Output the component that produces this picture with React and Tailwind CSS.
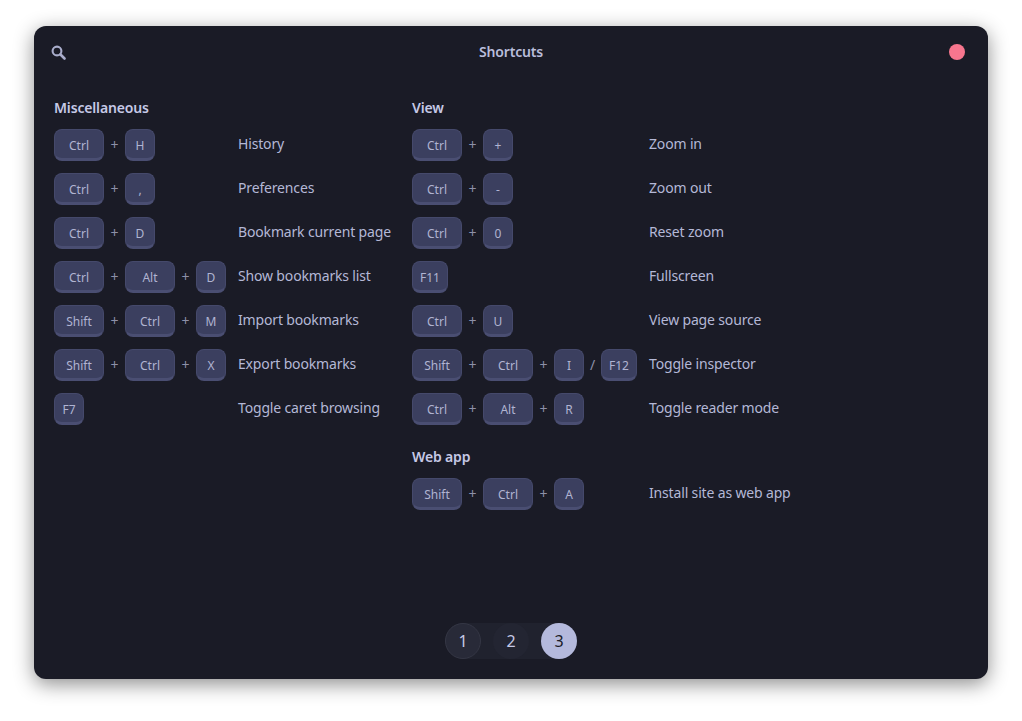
import React from 'react';

const miscRows = [
  { keys: ['Ctrl', '+', 'H'], label: 'History' },
  { keys: ['Ctrl', '+', ','], label: 'Preferences' },
  { keys: ['Ctrl', '+', 'D'], label: 'Bookmark current page' },
  { keys: ['Ctrl', '+', 'Alt', '+', 'D'], label: 'Show bookmarks list' },
  { keys: ['Shift', '+', 'Ctrl', '+', 'M'], label: 'Import bookmarks' },
  { keys: ['Shift', '+', 'Ctrl', '+', 'X'], label: 'Export bookmarks' },
  { keys: ['F7'], label: 'Toggle caret browsing' },
];

const viewRows = [
  { keys: ['Ctrl', '+', 'plus'], label: 'Zoom in' },
  { keys: ['Ctrl', '+', '-'], label: 'Zoom out' },
  { keys: ['Ctrl', '+', '0'], label: 'Reset zoom' },
  { keys: ['F11'], label: 'Fullscreen' },
  { keys: ['Ctrl', '+', 'U'], label: 'View page source' },
  { keys: ['Shift', '+', 'Ctrl', '+', 'I', '/', 'F12'], label: 'Toggle inspector' },
  { keys: ['Ctrl', '+', 'Alt', '+', 'R'], label: 'Toggle reader mode' },
];

const webRows = [
  { keys: ['Shift', '+', 'Ctrl', '+', 'A'], label: 'Install site as web app' },
];

const MODIFIERS = ['Ctrl', 'Alt', 'Shift'];

function Key({ name }) {
  const text = name === 'plus' ? '+' : name;
  const wide = MODIFIERS.includes(text);
  return (
    <div className={`h-8 ${wide ? 'w-[50px]' : 'min-w-[30px] px-[7px]'} flex items-center justify-center rounded-lg bg-[#3b3f5f] border border-[#45496b] border-b-[3px] border-b-[#4a4e72] text-[12px] text-[#b0b4d2] pt-[3px]`}>
      {text}
    </div>
  );
}

function Row({ keys, label, keysWidth }) {
  return (
    <div className="flex items-center h-8">
      <div className={`flex items-center shrink-0 ${keysWidth}`}>
        {keys.map((k, i) =>
          k === '+' ? (
            <span key={i} className="w-[21px] text-center text-[14px] text-[#8d90a8] -mt-0.5">+</span>
          ) : k === '/' ? (
            <span key={i} className="w-[17px] text-center text-[14px] text-[#8d90a8] -mt-0.5">/</span>
          ) : (
            <Key key={i} name={k} />
          )
        )}
      </div>
      <span className="text-[14px] tracking-[-0.16px] text-[#b4b8d6] -mt-[3px]">{label}</span>
    </div>
  );
}

function Section({ title, rows, keysWidth }) {
  return (
    <div className="flex flex-col gap-3">
      <h2 className="h-5 leading-[22px] text-[14px] tracking-[-0.16px] font-semibold text-[#c6c9e6]">{title}</h2>
      {rows.map((r) => (
        <Row key={r.label} {...r} keysWidth={keysWidth} />
      ))}
    </div>
  );
}

function Page({ n, state }) {
  const cls =
    state === 'active'
      ? 'bg-[#b4b9dc] text-[#1a1b26]'
      : state === 'hover'
        ? 'bg-[#282a38] border border-[#343644] text-[#c6c9e6]'
        : 'bg-[#232532] text-[#c6c9e6]';
  return <div className={`w-9 h-9 rounded-full flex items-center justify-center text-[16px] ${cls}`}>{n}</div>;
}

export default function App() {
  return (
    <div className="w-[1022px] h-[721px] bg-white pt-[26px] pl-[34px] font-['Noto_Sans',sans-serif]">
      <div className="w-[954px] h-[653px] rounded-xl bg-[#1a1b26] flex flex-col shadow-[0_5px_20px_rgba(0,0,0,0.45)]">
        {/* Header */}
        <div className="flex items-center justify-between h-[52px] pl-4 pr-[23px] shrink-0">
          <div className="w-[23px] pl-px">
            <svg width="15" height="15" viewBox="0 0 15 15" fill="none" stroke="#a9adcb">
              <circle cx="6" cy="6" r="4.4" strokeWidth="2.1" />
              <path d="M9.5 9.5l4 4" strokeWidth="2.6" strokeLinecap="round" />
            </svg>
          </div>
          <span className="text-[14px] tracking-[-0.16px] font-semibold text-[#b9bddb] -mt-0.5">Shortcuts</span>
          <div className="w-4 h-4 rounded-full bg-[#f7768e]" />
        </div>

        {/* Columns */}
        <div className="flex flex-1 pl-5 pt-[19px]">
          <div className="w-[358px]">
            <Section title="Miscellaneous" rows={miscRows} keysWidth="w-[184px]" />
          </div>
          <div className="flex flex-col gap-[21px]">
            <Section title="View" rows={viewRows} keysWidth="w-[237px]" />
            <Section title="Web app" rows={webRows} keysWidth="w-[237px]" />
          </div>
        </div>

        {/* Pager */}
        <div className="flex justify-center pb-5">
          <div className="flex gap-3 rounded-full bg-[#20222e]">
            <Page n="1" state="hover" />
            <Page n="2" />
            <Page n="3" state="active" />
          </div>
        </div>
      </div>
    </div>
  );
}
